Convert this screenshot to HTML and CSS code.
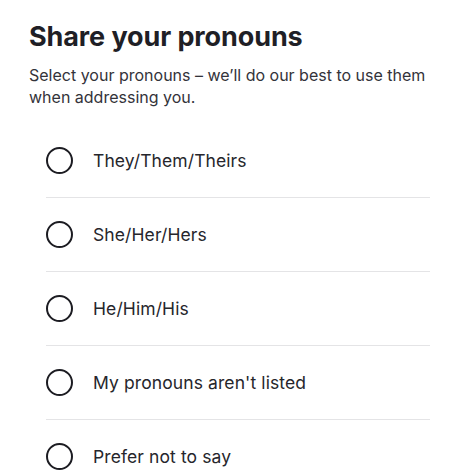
FILE: index.html
```html
<!DOCTYPE html>
<html lang="en">
<head>
<meta charset="utf-8">
<link rel="stylesheet" href="styles.css">
</head>
<body>
<main class="page">
  <header class="intro">
    <h1 class="title">Share your pronouns</h1>
    <p class="lead">Select your pronouns – we’ll do our best to use them when addressing you.</p>
  </header>
  <ul class="options">
    <li class="option"><span class="radio"></span><span class="label">They/Them/Theirs</span></li>
    <li class="option"><span class="radio"></span><span class="label">She/Her/Hers</span></li>
    <li class="option"><span class="radio"></span><span class="label">He/Him/His</span></li>
    <li class="option"><span class="radio"></span><span class="label">My pronouns aren't listed</span></li>
    <li class="option"><span class="radio"></span><span class="label">Prefer not to say</span></li>
  </ul>
</main>
</body>
</html>
```
FILE: styles.css
```css
html, body {
  margin: 0;
  padding: 0;
  background: #ffffff;
}
body {
  font-family: "Inter", "Noto Sans", sans-serif;
  color: #2a2a30;
}
.page {
  padding: 0 0 0 29px;
  width: 474px;
  box-sizing: border-box;
}
.intro {
  padding-top: 20px;
}
.title {
  margin: 0;
  font-size: 27px;
  line-height: 34px;
  font-weight: 700;
  color: #1f1f26;
  letter-spacing: -0.1px;
}
.lead {
  margin: 10px 0 0 0;
  font-size: 16px;
  line-height: 22px;
  color: #33333a;
  letter-spacing: 0;
  width: 420px;
}
.options {
  list-style: none;
  margin: 16px 0 0 17px;
  padding: 0;
  width: 384px;
}
.option {
  display: flex;
  align-items: center;
  height: 73px;
  border-bottom: 1px solid #e4e4e6;
}
.radio {
  width: 27px;
  height: 27px;
  box-sizing: border-box;
  border: 2.5px solid #1c1c22;
  border-radius: 50%;
  flex: 0 0 auto;
}
.label {
  margin-left: 20px;
  font-size: 17.5px;
  color: #26262c;
  letter-spacing: 0.1px;
}
```
